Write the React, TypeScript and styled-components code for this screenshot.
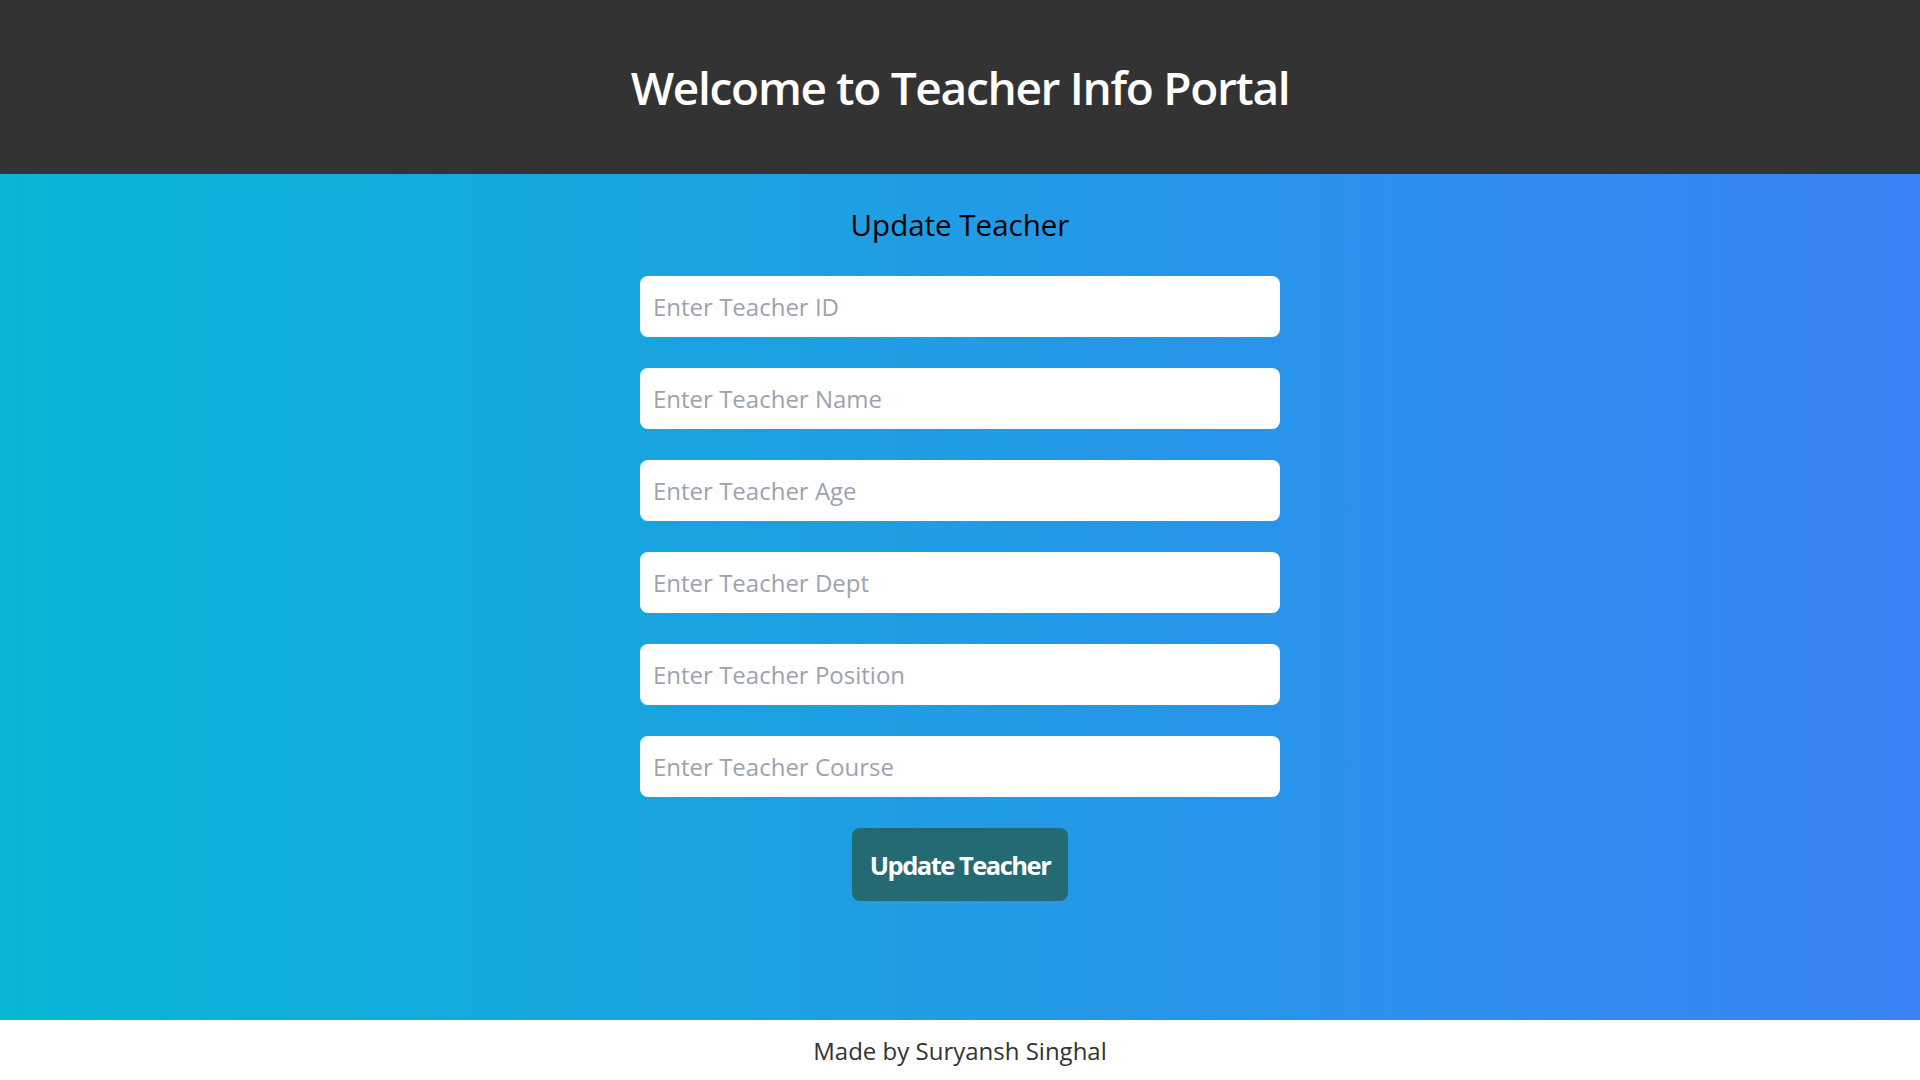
import React from 'react';
import styled, { createGlobalStyle } from 'styled-components';

const GlobalStyle = createGlobalStyle`
  * {
    box-sizing: border-box;
  }
  body {
    margin: 0;
    font-family: 'Open Sans', 'Noto Sans', sans-serif;
  }
`;

const fields = [
  'Enter Teacher ID',
  'Enter Teacher Name',
  'Enter Teacher Age',
  'Enter Teacher Dept',
  'Enter Teacher Position',
  'Enter Teacher Course',
];

const App = () => {
  return (
    <Page>
      <GlobalStyle />
      <Header>
        <Title>Welcome to Teacher Info Portal</Title>
      </Header>
      <Main>
        <Heading>Update Teacher</Heading>
        <Form onSubmit={(e) => e.preventDefault()}>
          {fields.map((f) => (
            <Input key={f} type="text" placeholder={f} />
          ))}
          <Button type="submit">Update Teacher</Button>
        </Form>
      </Main>
      <Footer>
        <p>Made by Suryansh Singhal</p>
      </Footer>
    </Page>
  );
};

export default App;

const Page = styled.div`
  display: flex;
  flex-direction: column;
  min-height: 100vh;
`;

const Header = styled.header`
  display: flex;
  justify-content: center;
  align-items: center;
  height: 174px;
  background-color: #333333;
`;

const Title = styled.h1`
  margin: 0;
  font-size: 46px;
  font-weight: 600;
  letter-spacing: -1.3px;
  color: #ffffff;
`;

const Main = styled.main`
  display: flex;
  flex-direction: column;
  align-items: center;
  height: 846px;
  padding-top: 30px;
  background: linear-gradient(to right, #06b6d4, #3b82f6);
`;

const Heading = styled.h2`
  margin: 0 0 31px;
  font-size: 29.5px;
  font-weight: 400;
  color: #000000;
`;

const Form = styled.form`
  display: flex;
  flex-direction: column;
  align-items: center;
  gap: 31px;
  width: 640px;
`;

const Input = styled.input`
  width: 100%;
  height: 61px;
  padding: 0 13px;
  border: none;
  border-radius: 8px;
  background: #ffffff;
  font-family: 'Open Sans', 'Noto Sans', sans-serif;
  font-size: 24px;
  color: #111827;
  outline: none;
  &::placeholder {
    color: #9ca3af;
  }
`;

const Button = styled.button`
  height: 73px;
  padding: 0 18px;
  border: none;
  border-radius: 8px;
  background-color: #236a72;
  font-family: 'Open Sans', 'Noto Sans', sans-serif;
  font-size: 25.5px;
  font-weight: 700;
  letter-spacing: -1.5px;
  color: #ffffff;
  cursor: pointer;
`;

const Footer = styled.footer`
  display: flex;
  justify-content: center;
  align-items: center;
  height: 60px;
  background: #ffffff;
  p {
    margin: 0;
    font-size: 24px;
    color: #333333;
  }
`;
